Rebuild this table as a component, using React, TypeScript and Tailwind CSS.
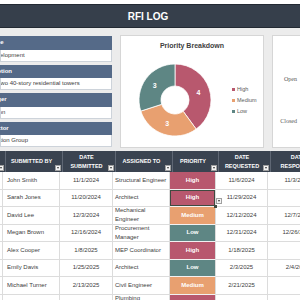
import React from "react";

type Priority = "High" | "Medium" | "Low";

type Rfi = {
  by: string;
  submitted: string;
  assigned: string;
  priority: Priority;
  requested: string;
  responded: string;
  selected?: boolean;
};

const rows: Rfi[] = [
  { by: "John Smith", submitted: "11/1/2024", assigned: "Structural Engineer", priority: "High", requested: "11/6/2024", responded: "11/3/2024" },
  { by: "Sarah Jones", submitted: "11/20/2024", assigned: "Architect", priority: "High", requested: "11/29/2024", responded: "", selected: true },
  { by: "David Lee", submitted: "12/3/2024", assigned: "Mechanical Engineer", priority: "Medium", requested: "12/12/2024", responded: "12/7/2024" },
  { by: "Megan Brown", submitted: "12/16/2024", assigned: "Procurement Manager", priority: "Low", requested: "12/31/2024", responded: "12/26/2024" },
  { by: "Alex Cooper", submitted: "1/8/2025", assigned: "MEP Coordinator", priority: "High", requested: "1/18/2025", responded: "" },
  { by: "Emily Davis", submitted: "1/25/2025", assigned: "Architect", priority: "Low", requested: "2/3/2025", responded: "2/4/2025" },
  { by: "Michael Turner", submitted: "2/13/2025", assigned: "Civil Engineer", priority: "Medium", requested: "2/21/2025", responded: "" },
  { by: "Chris Walker", submitted: "3/2/2025", assigned: "Plumbing Consultant", priority: "High", requested: "3/10/2025", responded: "" },
];

const priorityBg: Record<Priority, string> = {
  High: "bg-[#b8586e]",
  Medium: "bg-[#e8a070]",
  Low: "bg-[#5e8684]",
};

// project info blocks, text is clipped on the left like the sheet
const info = [
  { label: "Project Type", labelShift: "-ml-[32px]", value: "Residential Development", valueShift: "-ml-[43px]" },
  { label: "Project Description", labelShift: "-ml-[43px]", value: "Two 40-story residential towers", valueShift: "-ml-[4px]" },
  { label: "Project Manager", labelShift: "-ml-[40px]", value: "Sarah Johnson", valueShift: "-ml-[36px]" },
  { label: "General Contractor", labelShift: "-ml-[46px]", value: "Skyline Construction Group", valueShift: "-ml-[46px]" },
];

function FilterButton() {
  return (
    <div className="absolute right-[1px] bottom-[1px] w-[6px] h-[6px] bg-[#f4f4f4] border border-[#a0a0a0] flex items-center justify-center">
      <div className="w-0 h-0 border-x-[1.5px] border-x-transparent border-t-[2px] border-t-[#333]" />
    </div>
  );
}

function ProjectInfo() {
  return (
    <div className="w-[112px] shrink-0 mt-[1px] flex flex-col gap-[3px]">
      {info.map((item) => (
        <div key={item.label} className="flex flex-col">
          <div className="h-[13.5px] bg-[#556a88] flex items-center overflow-hidden whitespace-nowrap text-[6px] font-bold text-white">
            <span className={item.labelShift}>{item.label}</span>
          </div>
          <div className="h-[12px] bg-white border-x border-b border-[#cdd3da] flex items-center overflow-hidden whitespace-nowrap text-[6px] text-[#404040]">
            <span className={item.valueShift}>{item.value}</span>
          </div>
        </div>
      ))}
    </div>
  );
}

function PieCard() {
  return (
    <div className="w-[144px] h-[113px] shrink-0 bg-white border border-[#d6d6d6] flex flex-col">
      <div className="mt-[5px] text-center text-[7px] leading-[9px] font-bold text-[#404040]">
        Priority Breakdown
      </div>
      <div className="mt-[12px] pl-[16px] flex items-center">
        <svg width="76" height="76" viewBox="0 0 76 76">
          <path d="M38 2 A36 36 0 0 1 59.16 67.12 L46.23 49.33 A14 14 0 0 0 38 24 Z" fill="#b8586e" stroke="#fff" strokeWidth="0.8" />
          <path d="M59.16 67.12 A36 36 0 0 1 3.76 49.12 L24.68 42.33 A14 14 0 0 0 46.23 49.33 Z" fill="#e8a070" stroke="#fff" strokeWidth="0.8" />
          <path d="M3.76 49.12 A36 36 0 0 1 38 2 L38 24 A14 14 0 0 0 24.68 42.33 Z" fill="#5e8684" stroke="#fff" strokeWidth="0.8" />
          <text x="61.5" y="33" fill="#fff" fontSize="7" fontWeight="bold" textAnchor="middle" fontFamily="Liberation Sans, Arial, sans-serif">4</text>
          <text x="30.3" y="64.3" fill="#fff" fontSize="7" fontWeight="bold" textAnchor="middle" fontFamily="Liberation Sans, Arial, sans-serif">3</text>
          <text x="17.8" y="25.8" fill="#fff" fontSize="7" fontWeight="bold" textAnchor="middle" fontFamily="Liberation Sans, Arial, sans-serif">3</text>
        </svg>
        <div className="ml-[19px] flex flex-col gap-[4px]">
          {(["High", "Medium", "Low"] as Priority[]).map((p) => (
            <div key={p} className="flex items-center gap-[2px] text-[5.5px] leading-[7px] text-[#595959]">
              <span className={`w-[3px] h-[3px] ${priorityBg[p]}`} />
              {p}
            </div>
          ))}
        </div>
      </div>
    </div>
  );
}

function StatusCard() {
  return (
    <div className="w-[60px] h-[113px] shrink-0 bg-white border border-[#d6d6d6]">
      <div className="w-[24px] mt-[40px] flex flex-col items-end gap-[36px] text-[6px] leading-[6px] text-[#595959] font-['Liberation_Serif',serif]">
        <span>Open</span>
        <span>Closed</span>
      </div>
    </div>
  );
}

const headers = [
  { w: "w-[3px]", lines: [] as string[] },
  { w: "w-[57px]", lines: ["SUBMITTED BY"] },
  { w: "w-[53px]", lines: ["DATE", "SUBMITTED"] },
  { w: "w-[57px]", lines: ["ASSIGNED TO"] },
  { w: "w-[46px]", lines: ["PRIORITY"] },
  { w: "w-[52px]", lines: ["DATE", "REQUESTED"] },
  { w: "w-[60px]", lines: ["DATE", "RESPONDED"] },
];

function Table() {
  const cell = "shrink-0 h-full border-b border-r border-[#dcdcdc] flex items-center text-[6px] leading-[9px] text-[#404040] overflow-hidden";
  return (
    <div className="flex flex-col">
      <div className="h-[21px] bg-[#3a4350] flex">
        {headers.map((h, i) => (
          <div key={i} className={`${h.w} shrink-0 relative h-full border-r border-[#5f6774] flex flex-col items-center justify-center pr-[5px] overflow-hidden`}>
            {h.lines.map((l) => (
              <span key={l} className="text-[5.5px] leading-[9px] font-bold text-white whitespace-nowrap">
                {l}
              </span>
            ))}
            <FilterButton />
          </div>
        ))}
      </div>
      {rows.map((r) => (
        <div key={r.by} className="h-[17.5px] flex shrink-0">
          <div className={`${cell} w-[3px]`} />
          <div className={`${cell} w-[57px] pl-[4px] whitespace-nowrap`}>{r.by}</div>
          <div className={`${cell} w-[53px] justify-center`}>{r.submitted}</div>
          <div className={`${cell} w-[57px] pl-[2px] pr-[2px]`}>{r.assigned}</div>
          <div className={`shrink-0 h-full w-[46px] relative border-b-[1.5px] border-b-[#f2f2f2] border-r border-r-[#dcdcdc] ${priorityBg[r.priority]} flex items-center justify-center text-[6px] font-bold text-white`}>
            {r.priority}
            {r.selected && (
              <>
                <div className="absolute inset-0 border-[1.5px] border-[#3f4a40]" />
                <div className="absolute -right-[2px] -bottom-[2px] w-[3px] h-[3px] bg-[#3f4a40] z-10" />
                <div className="absolute left-[calc(100%+1px)] bottom-[2px] w-[6px] h-[6px] bg-[#f4f4f4] border border-[#a0a0a0] flex items-center justify-center z-10">
                  <div className="w-0 h-0 border-x-[1.5px] border-x-transparent border-t-[2px] border-t-[#333]" />
                </div>
              </>
            )}
          </div>
          <div className={`${cell} w-[52px] justify-center`}>{r.requested}</div>
          <div className={`${cell} w-[60px] justify-center whitespace-nowrap`}>{r.responded}</div>
        </div>
      ))}
    </div>
  );
}

export default function App() {
  return (
    <div className="w-[300px] h-[300px] overflow-hidden bg-white font-['Liberation_Sans',Arial,sans-serif]">
      <div className="h-[4px] bg-white" />
      <div className="h-[24px] bg-[#363f4b] border-y border-[#232a33] flex items-center justify-center pr-[4px]">
        <span className="text-[10px] font-bold text-white">RFI LOG</span>
      </div>
      <div className="h-[123px] bg-[#ececec] flex gap-[8px] pt-[7px]">
        <ProjectInfo />
        <PieCard />
        <StatusCard />
      </div>
      <Table />
    </div>
  );
}
